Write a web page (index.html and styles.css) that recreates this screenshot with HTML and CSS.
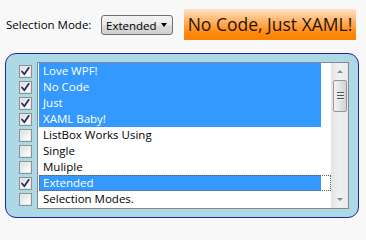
FILE: index.html
```html
<!DOCTYPE html>
<html>
<head>
<meta charset="utf-8">
<link rel="stylesheet" href="styles.css">
</head>
<body>
<div class="top">
  <span class="label">Selection Mode:</span>
  <div class="combo"><span class="combo-text">Extended</span><span class="combo-arrow"></span></div>
  <div class="banner">No Code, Just XAML!</div>
</div>
<div class="panel">
  <div class="checks">
    <div class="chk"><svg class="mark" viewBox="0 0 11 11" width="11" height="11"><path d="M2 5.5 L4.3 8.3 L8.8 1.8" /></svg></div>
    <div class="chk"><svg class="mark" viewBox="0 0 11 11" width="11" height="11"><path d="M2 5.5 L4.3 8.3 L8.8 1.8" /></svg></div>
    <div class="chk"><svg class="mark" viewBox="0 0 11 11" width="11" height="11"><path d="M2 5.5 L4.3 8.3 L8.8 1.8" /></svg></div>
    <div class="chk"><svg class="mark" viewBox="0 0 11 11" width="11" height="11"><path d="M2 5.5 L4.3 8.3 L8.8 1.8" /></svg></div>
    <div class="chk"></div>
    <div class="chk"></div>
    <div class="chk"></div>
    <div class="chk"><svg class="mark" viewBox="0 0 11 11" width="11" height="11"><path d="M2 5.5 L4.3 8.3 L8.8 1.8" /></svg></div>
    <div class="chk"></div>
  </div>
  <div class="listbox">
    <div class="items">
      <div class="item sel"><span class="txt">Love WPF!</span></div>
      <div class="item sel"><span class="txt">No Code</span></div>
      <div class="item sel"><span class="txt">Just</span></div>
      <div class="item sel"><span class="txt">XAML Baby!</span></div>
      <div class="item"><span class="txt">ListBox Works Using</span></div>
      <div class="item"><span class="txt">Single</span></div>
      <div class="item"><span class="txt">Muliple</span></div>
      <div class="item sel focus"><span class="txt">Extended</span></div>
      <div class="item"><span class="txt">Selection Modes.</span></div>
    </div>
    <div class="scrollbar">
      <div class="arrow up"></div>
      <div class="track">
        <div class="thumb"><span class="grip"></span><span class="grip"></span><span class="grip"></span></div>
      </div>
      <div class="arrow down"></div>
    </div>
  </div>
</div>
</body>
</html>
```

FILE: styles.css
```css
html, body {
  margin: 0;
  padding: 0;
  background: #f8f8f8;
  font-family: "Open Sans", "Noto Sans", sans-serif;
  font-size: 11.5px;
  color: #000;
}
.top {
  display: flex;
  align-items: center;
  height: 32px;
  padding: 8px 0 0 6px;
}
.label {
  width: 95px;
}
.combo {
  box-sizing: border-box;
  width: 72px;
  height: 20px;
  border: 1px solid #707070;
  border-radius: 3px;
  background: linear-gradient(#f2f2f2 0%, #ebebeb 50%, #dddddd 51%, #cfcfcf 100%);
  display: flex;
  align-items: center;
  padding-left: 4px;
  margin-top: 2px;
}
.combo-text {
  flex: 1;
}
.combo-arrow {
  width: 0;
  height: 0;
  border-left: 3.5px solid transparent;
  border-right: 3.5px solid transparent;
  border-top: 4px solid #000;
  margin-right: 5px;
}
.banner {
  margin-left: 11px;
  width: 172px;
  height: 31px;
  box-sizing: border-box;
  background: linear-gradient(#ffe3c6 0%, #ffb266 40%, #ff8a10 75%, #ff8000 100%);
  font-size: 17.5px;
  color: #2a1400;
  display: flex;
  align-items: center;
  justify-content: center;
  padding-bottom: 1px;
}
.panel {
  box-sizing: border-box;
  margin: 13px 0 0 5px;
  width: 354px;
  height: 165px;
  border: 1.5px solid #22229a;
  border-radius: 11px;
  background: #add8e6;
  display: flex;
  padding: 8px 0 0 13px;
}
.checks {
  display: flex;
  flex-direction: column;
  padding-top: 1px;
  width: 18px;
}
.chk {
  box-sizing: border-box;
  width: 13px;
  height: 13px;
  margin: 1.5px 0 1.5px 0;
  border: 1px solid #8e8f8f;
  background: linear-gradient(135deg, #dcdcdc, #f6f6f6 70%, #ffffff);
  box-shadow: inset 0 0 0 1px #e9e9e9;
  display: flex;
  align-items: center;
  justify-content: center;
  flex: none;
}
.chk .mark path {
  fill: none;
  stroke: #262663;
  stroke-width: 1.7;
  stroke-linecap: round;
  stroke-linejoin: round;
}
.listbox {
  box-sizing: border-box;
  width: 312px;
  height: 147px;
  border: 1px solid #828790;
  background: #fff;
  display: flex;
}
.items {
  width: 293px;
  padding-left: 1px;
  box-sizing: border-box;
}
.item {
  box-sizing: border-box;
  height: 16px;
  line-height: 15px;
  width: 292px;
}
.txt {
  display: block;
  width: 282px;
  height: 16px;
  padding-left: 4px;
  box-sizing: border-box;
}
.item.sel .txt {
  background: #3399ff;
  color: #fff;
}
.item.focus {
  outline: 1px dotted #6b5d4c;
  outline-offset: -1px;
}
.scrollbar {
  width: 17px;
  display: flex;
  flex-direction: column;
  background: linear-gradient(90deg, #e3e3e3, #f0f0f0 50%, #e8e8e8);
}
.arrow {
  height: 17px;
  display: flex;
  align-items: center;
  justify-content: center;
}
.arrow.up::before {
  content: "";
  border-left: 3px solid transparent;
  border-right: 3px solid transparent;
  border-bottom: 3px solid #8a8a8a;
}
.arrow.down::before {
  content: "";
  border-left: 3px solid transparent;
  border-right: 3px solid transparent;
  border-top: 3px solid #8a8a8a;
}
.track {
  flex: 1;
}
.thumb {
  box-sizing: border-box;
  margin: 0 1px 0 2px;
  height: 32px;
  border: 1px solid #979797;
  border-radius: 2px;
  background: linear-gradient(90deg, #f4f4f4, #e4e4e4 50%, #d2d2d2);
  display: flex;
  flex-direction: column;
  align-items: center;
  justify-content: center;
  gap: 1px;
}
.grip {
  width: 7px;
  height: 1px;
  background: #555;
  border-bottom: 1px solid #eee;
}
```
